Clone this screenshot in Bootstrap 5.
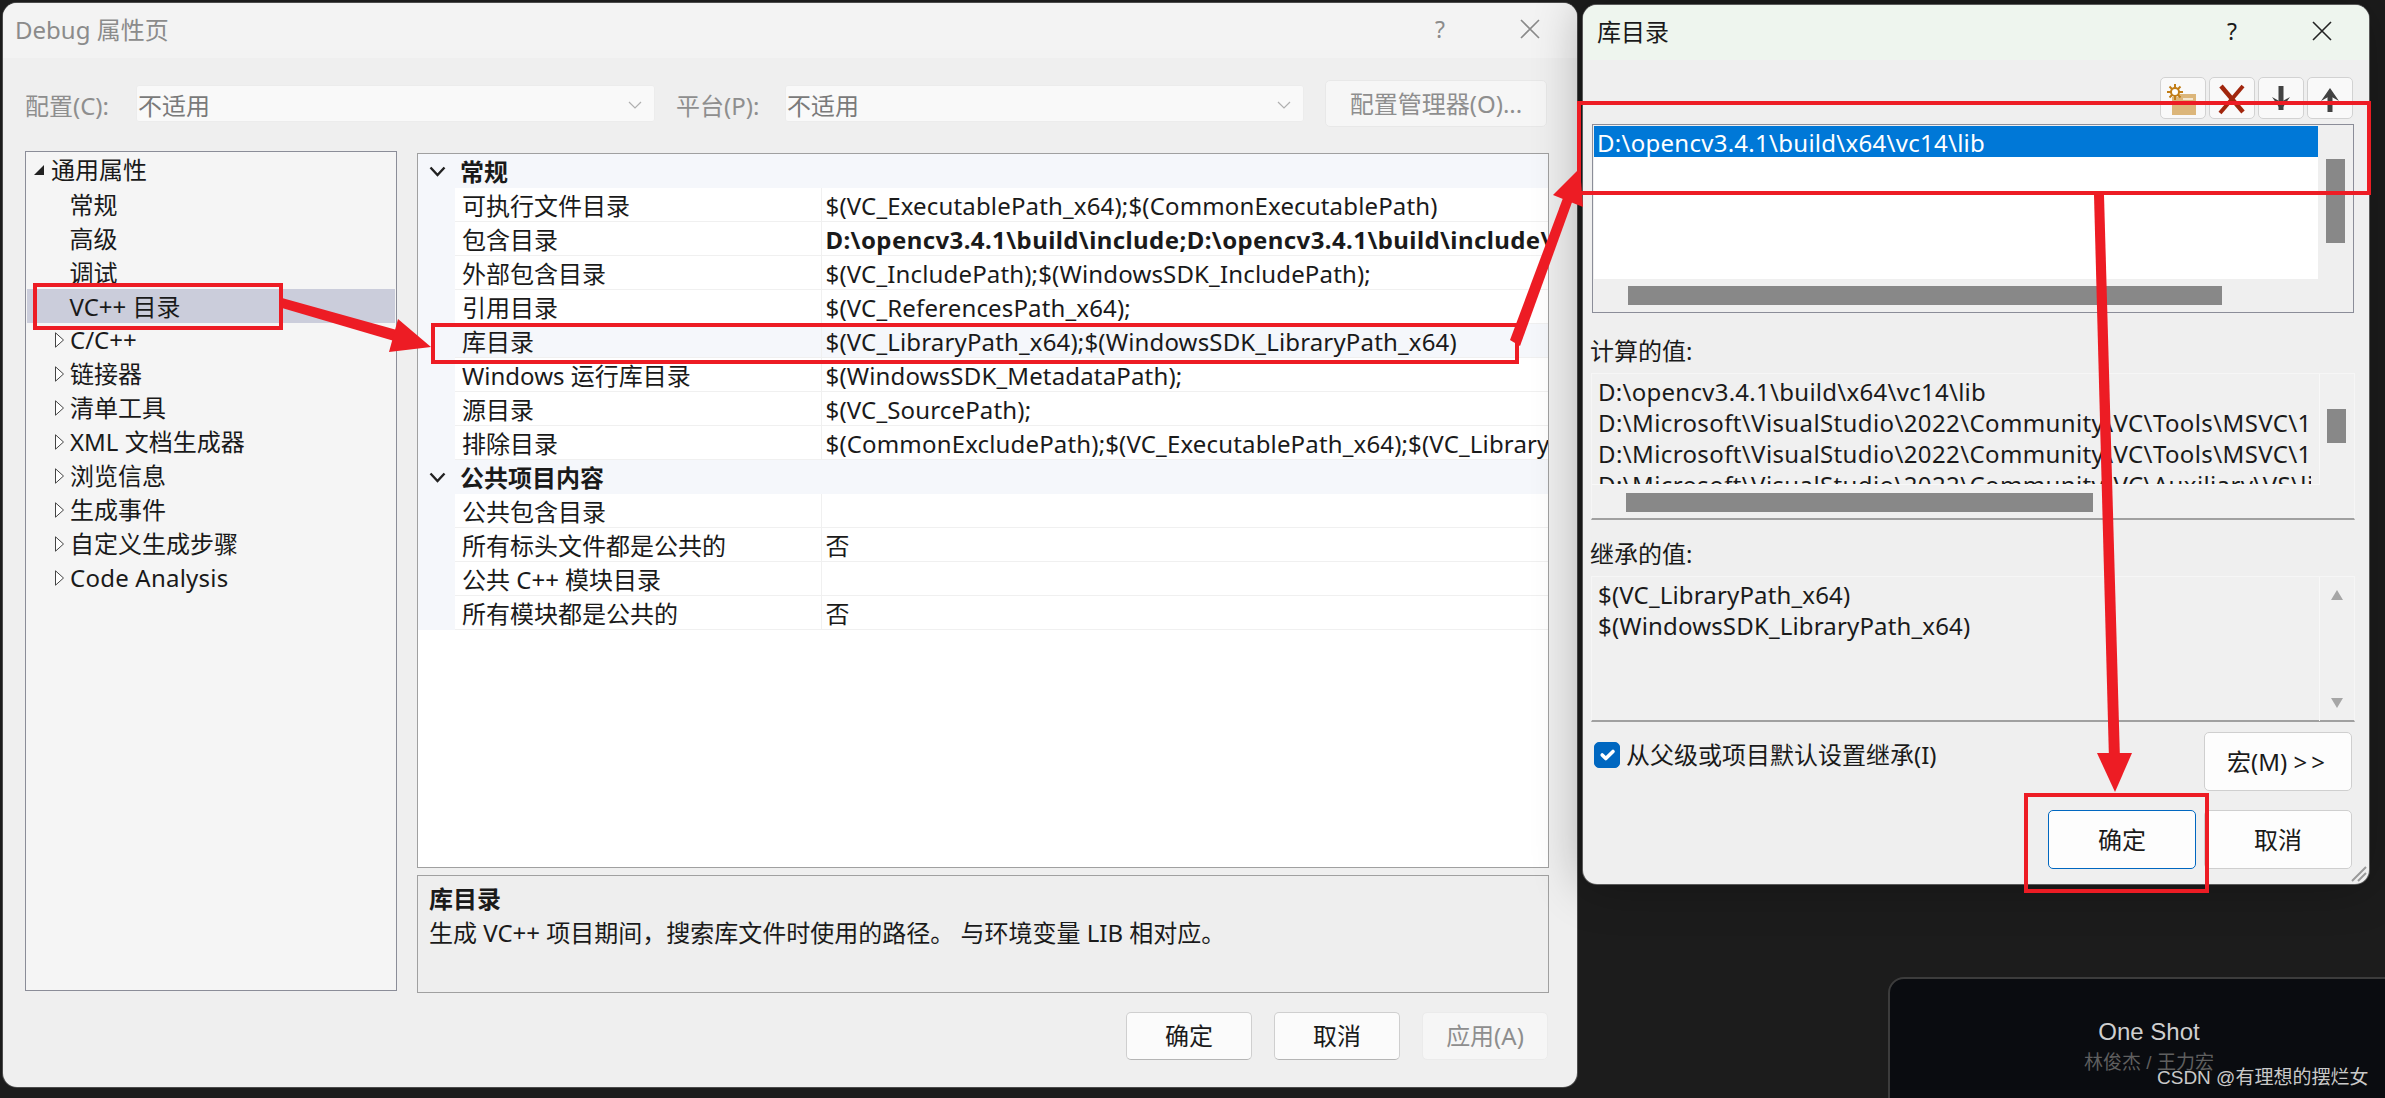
<!DOCTYPE html>
<html lang="zh-CN">
<head>
<meta charset="utf-8">
<title>Debug 属性页</title>
<link rel="stylesheet" href="https://cdn.jsdelivr.net/npm/bootstrap@5.3.0/dist/css/bootstrap.min.css">
<style>
html,body{margin:0;background:#1c1c1c;overflow:hidden}
body{font-family:"Noto Sans","Noto Sans CJK SC",sans-serif;font-size:24px;color:#1a1a1a}
.desk{position:relative;width:2385px;height:1098px;background:#1c1c1c;overflow:hidden}
.win{position:absolute;background:#efefef;border-radius:14px;overflow:hidden;box-shadow:0 0 0 1px #4c4c4c}
.win-a{left:3px;top:3px;width:1574px;height:1084px}
.win-b{left:1583px;top:5px;width:786px;height:879px;box-shadow:0 0 0 1px #5a5a5a,0 0 50px rgba(0,0,0,.3)}
.tbar{height:55px;line-height:55px;flex:none;padding-bottom:3px}
.win-a .tbar{background:#f3f3f3;color:#8b8b8b;padding-left:12px;padding-right:37px}
.win-b .tbar{background:#eef5ee;padding-left:14px;padding-right:37px}
.help-q{width:85px;font-size:23px}
.cfg-row{height:47px;margin-top:22px;padding-left:22px;color:#8e8e8e}
.cfg-label{width:111px;padding-top:4px}
.cfg-label2{width:109px;margin-left:21px;padding-top:4px}
.fake-select{width:519px;height:37px;line-height:37px;background:#f9f9f9;border:1px solid #ececec;border-radius:3px;padding:3px 12px 0 1px;color:#7a7a7a}
.btn.ghost-btn{width:222px;height:47px;margin-left:21px;--bs-btn-disabled-bg:#f6f6f6;--bs-btn-disabled-border-color:#e8e8e8;--bs-btn-disabled-color:#8e8e8e;--bs-btn-disabled-opacity:1;border-radius:5px;font-size:24px;padding:0}
.main-row{margin-top:24px;padding-left:22px}
.tree-box{width:372px;height:840px;background:#f5f5f5;border:1px solid #8b8d98;padding:1px}
.tree-item{height:34px;line-height:36px;white-space:nowrap}
.tree-root{padding-left:7px}
.tree-node{padding-left:28px}
.tree-leaf{padding-left:42.500px}
.tree-on{background:#cbcddb}
.tri-gap{margin-right:7px;flex:none}
.tri-gap2{margin-right:6px;flex:none}
.ltr-fit{letter-spacing:.23px}
.prop-col{margin-left:20px;width:1132px;padding-top:2px}
.prop-grid{height:715px;background:#fff;border:1px solid #a0a0a0;overflow:hidden}
.grid-head{height:34px;line-height:37px;background:#f5f7fb;font-weight:700;padding-left:11px}
.grid-head svg{margin-right:14px;flex:none}
.grid-line{height:34px;line-height:36px;white-space:nowrap}
.gut{width:37px;flex:none;background:#f5f7fb}
.cell-name{width:366px;flex:none;padding-left:7px;border-bottom:1px solid #f0f0f0}
.cell-val{flex:1;min-width:0;overflow:hidden;padding-left:3.500px;border-left:1px solid #f0f0f0;border-bottom:1px solid #f0f0f0;letter-spacing:.16px}
.cell-val.fw-bold{letter-spacing:.4px}
.line-on .cell-name,.line-on .cell-val{background:#f5f7fb}
.desc-box{height:118px;margin-top:7px;background:#eee;border:1px solid #a0a0a0;padding:6px 11px}
.desc-box div{line-height:34px}
.foot-a{margin-top:19px;padding-right:29px;gap:22px}
.btn.std-btn{width:126px;height:48px;background:#fbfbfb;border:1px solid #cfcfcf;border-bottom-color:#b5b5b5;border-radius:5px;font-size:24px;padding:0;color:#1a1a1a}
.btn.std-off{--bs-btn-disabled-bg:#f6f6f6;--bs-btn-disabled-border-color:#ebebeb;--bs-btn-disabled-color:#8e8e8e;--bs-btn-disabled-opacity:1;background:#f6f6f6;border-color:#ebebeb;color:#8e8e8e}
.tool-row{margin-top:17px;padding-right:16px;gap:3px}
.tool-btn{width:46px;height:42px;padding:0;background:#f9f9f9;border:1px solid #d2d2d2;border-radius:5px;line-height:0}
.list-box{height:189px;margin:5px 15px 0 9px;border:1px solid #8b8d98;padding:1px}
.list-white{width:724px;height:153px;background:#fff;flex:none}
.list-sel{height:31px;line-height:33px;background:#0078d7;color:#fff;padding-left:3px;letter-spacing:.27px}
.vtrack{flex:1;padding:33px 0 0 8px}
.vthumb{width:19px;height:84px;background:#888}
.hthumb{height:19px;background:#888}
.hthumb-a{width:594px;margin:7px 0 0 34px}
.sect-label{line-height:44px;margin-left:7px}
.sect-a{padding-top:16px}
.sect-b{padding-top:12px}
.val-box{margin:0 14px 0 8px;border:1px solid #f6f6f6;border-bottom:2px solid #a0a0a0;background:#f0f0f0}
.val-c{height:147px}
.val-d{height:146px}
.val-text{width:728px;flex:none;height:111px;overflow:hidden;padding:2px 8px 0 6px;border-bottom:1px solid #f8f8f8;border-right:1px solid #f8f8f8;white-space:nowrap;letter-spacing:.27px}
.val-d .val-text{height:144px;border-bottom:0;letter-spacing:.16px}
.val-text div{line-height:31px;overflow:hidden}
.val-text .path-fit{letter-spacing:.38px}
.vtrack2{flex:1;padding:35px 0 0 7px}
.vthumb2{width:19px;height:34px;background:#888}
.hthumb-b{width:467px;margin:8px 0 0 34px}
.arrows-box{flex:1;padding:13px 0 12px 0}
.foot-b{margin-top:10px;padding:0 17px 0 11px}
.inherit-check{padding:0;margin:8px 0 0;min-height:0;gap:6px}
.inherit-check .form-check-input{float:none;margin:0;width:26px;height:26px;border-radius:5px;background-color:#0067c0;border-color:#0067c0;flex:none;--bs-form-check-bg-image:url("data:image/svg+xml,%3csvg xmlns='http://www.w3.org/2000/svg' viewBox='0 0 26 26'%3e%3cpath fill='none' stroke='%23fff' stroke-width='1.6' d='M7 13.5l4 5 8-11'/%3e%3c/svg%3e")}
.inherit-check .form-check-label{opacity:1;color:#1a1a1a;line-height:30px}
.big-btn{width:148px;height:59px;background:#fdfdfd;border:1px solid #cfcfcf;border-radius:5px;font-size:24px;padding:0;color:#1a1a1a}
.big-on{border-color:#0067c0}
.wide-gt{letter-spacing:4px}
.foot-c{margin-top:19px;padding-right:17px;gap:8px}
.grip{position:absolute;right:2px;bottom:2px}
.player{position:absolute;left:1888px;top:977px;width:500px;height:125px;background:#0a0c10;border:2px solid #3c3c3c;border-radius:16px 0 0 0;padding-left:22px;padding-top:38px;text-align:center;font-family:"Liberation Sans","Noto Sans CJK SC",sans-serif}
.player-t{color:#cfcfcf;font-size:24px;line-height:30px}
.player-s{color:#5f5f5f;font-size:19px;line-height:26px;margin-top:3px}
.wm{position:absolute;left:2157px;top:1065px;color:#c9c9c9;font-size:19px;line-height:26px;white-space:nowrap;font-family:"Liberation Sans","Noto Sans CJK SC",sans-serif}
.annot{position:absolute;left:0;top:0;pointer-events:none}
</style>
</head>
<body>
<div class="desk">

  <section class="win win-a d-flex flex-column">
    <div class="tbar d-flex align-items-center">
      <span>Debug 属性页</span>
      <span class="help-q ms-auto">?</span>
      <svg width="20" height="20" viewBox="0 0 20 20"><path d="M1 1l18 18M19 1L1 19" stroke="#8a8a8a" stroke-width="1.6" fill="none"/></svg>
    </div>
    <div class="cfg-row d-flex align-items-center">
      <span class="cfg-label">配置(C):</span>
      <div class="fake-select d-flex justify-content-between align-items-center"><span>不适用</span><svg width="14" height="8" viewBox="0 0 14 8"><path d="M1 1l6 6 6-6" stroke="#b0b0b0" fill="none" stroke-width="1.2"/></svg></div>
      <span class="cfg-label2">平台(P):</span>
      <div class="fake-select d-flex justify-content-between align-items-center"><span>不适用</span><svg width="14" height="8" viewBox="0 0 14 8"><path d="M1 1l6 6 6-6" stroke="#b0b0b0" fill="none" stroke-width="1.2"/></svg></div>
      <button class="btn ghost-btn" type="button" disabled>配置管理器(O)...</button>
    </div>
    <div class="main-row d-flex">
      <nav class="tree-box flex-none">
        <div class="tree-item tree-root d-flex align-items-center"><svg class="tri-gap" width="10" height="10" viewBox="0 0 10 10"><path d="M10 0v10H0z" fill="#222"/></svg>通用属性</div>
        <div class="tree-item tree-leaf">常规</div>
        <div class="tree-item tree-leaf">高级</div>
        <div class="tree-item tree-leaf">调试</div>
        <div class="tree-item tree-leaf tree-on">VC++ 目录</div>
        <div class="tree-item tree-node d-flex align-items-center"><svg class="tri-gap2" width="9" height="16" viewBox="0 0 9 16"><path d="M.5.8l8 7.2-8 7.2z" fill="#fff" stroke="#444"/></svg>C/C++</div>
        <div class="tree-item tree-node d-flex align-items-center"><svg class="tri-gap2" width="9" height="16" viewBox="0 0 9 16"><path d="M.5.8l8 7.2-8 7.2z" fill="#fff" stroke="#444"/></svg>链接器</div>
        <div class="tree-item tree-node d-flex align-items-center"><svg class="tri-gap2" width="9" height="16" viewBox="0 0 9 16"><path d="M.5.8l8 7.2-8 7.2z" fill="#fff" stroke="#444"/></svg>清单工具</div>
        <div class="tree-item tree-node d-flex align-items-center"><svg class="tri-gap2" width="9" height="16" viewBox="0 0 9 16"><path d="M.5.8l8 7.2-8 7.2z" fill="#fff" stroke="#444"/></svg>XML 文档生成器</div>
        <div class="tree-item tree-node d-flex align-items-center"><svg class="tri-gap2" width="9" height="16" viewBox="0 0 9 16"><path d="M.5.8l8 7.2-8 7.2z" fill="#fff" stroke="#444"/></svg>浏览信息</div>
        <div class="tree-item tree-node d-flex align-items-center"><svg class="tri-gap2" width="9" height="16" viewBox="0 0 9 16"><path d="M.5.8l8 7.2-8 7.2z" fill="#fff" stroke="#444"/></svg>生成事件</div>
        <div class="tree-item tree-node d-flex align-items-center"><svg class="tri-gap2" width="9" height="16" viewBox="0 0 9 16"><path d="M.5.8l8 7.2-8 7.2z" fill="#fff" stroke="#444"/></svg>自定义生成步骤</div>
        <div class="tree-item tree-node d-flex align-items-center"><svg class="tri-gap2" width="9" height="16" viewBox="0 0 9 16"><path d="M.5.8l8 7.2-8 7.2z" fill="#fff" stroke="#444"/></svg><span class="ltr-fit">Code Analysis</span></div>
      </nav>
      <div class="prop-col d-flex flex-column">
        <div class="prop-grid">
          <div class="grid-head d-flex align-items-center"><svg width="17" height="11" viewBox="0 0 17 11"><path d="M1.5 1.5l7 7.5 7-7.5" stroke="#222" stroke-width="2.4" fill="none"/></svg>常规</div>
          <div class="grid-line d-flex"><div class="gut"></div><div class="cell-name">可执行文件目录</div><div class="cell-val">$(VC_ExecutablePath_x64);$(CommonExecutablePath)</div></div>
          <div class="grid-line d-flex"><div class="gut"></div><div class="cell-name">包含目录</div><div class="cell-val fw-bold">D:\opencv3.4.1\build\include;D:\opencv3.4.1\build\include\</div></div>
          <div class="grid-line d-flex"><div class="gut"></div><div class="cell-name">外部包含目录</div><div class="cell-val">$(VC_IncludePath);$(WindowsSDK_IncludePath);</div></div>
          <div class="grid-line d-flex"><div class="gut"></div><div class="cell-name">引用目录</div><div class="cell-val">$(VC_ReferencesPath_x64);</div></div>
          <div class="grid-line line-on d-flex"><div class="gut"></div><div class="cell-name">库目录</div><div class="cell-val">$(VC_LibraryPath_x64);$(WindowsSDK_LibraryPath_x64)</div></div>
          <div class="grid-line d-flex"><div class="gut"></div><div class="cell-name">Windows 运行库目录</div><div class="cell-val">$(WindowsSDK_MetadataPath);</div></div>
          <div class="grid-line d-flex"><div class="gut"></div><div class="cell-name">源目录</div><div class="cell-val">$(VC_SourcePath);</div></div>
          <div class="grid-line d-flex"><div class="gut"></div><div class="cell-name">排除目录</div><div class="cell-val">$(CommonExcludePath);$(VC_ExecutablePath_x64);$(VC_Library</div></div>
          <div class="grid-head d-flex align-items-center"><svg width="17" height="11" viewBox="0 0 17 11"><path d="M1.5 1.5l7 7.5 7-7.5" stroke="#222" stroke-width="2.4" fill="none"/></svg>公共项目内容</div>
          <div class="grid-line d-flex"><div class="gut"></div><div class="cell-name">公共包含目录</div><div class="cell-val"></div></div>
          <div class="grid-line d-flex"><div class="gut"></div><div class="cell-name">所有标头文件都是公共的</div><div class="cell-val">否</div></div>
          <div class="grid-line d-flex"><div class="gut"></div><div class="cell-name">公共 C++ 模块目录</div><div class="cell-val"></div></div>
          <div class="grid-line d-flex"><div class="gut"></div><div class="cell-name">所有模块都是公共的</div><div class="cell-val">否</div></div>
        </div>
        <div class="desc-box">
          <div class="fw-bold">库目录</div>
          <div>生成 VC++ 项目期间，搜索库文件时使用的路径。 与环境变量 LIB 相对应。</div>
        </div>
      </div>
    </div>
    <div class="foot-a d-flex justify-content-end">
      <button class="btn std-btn" type="button">确定</button>
      <button class="btn std-btn" type="button">取消</button>
      <button class="btn std-btn std-off" type="button" disabled>应用(A)</button>
    </div>
  </section>

  <section class="win win-b d-flex flex-column">
    <div class="tbar d-flex align-items-center">
      <span>库目录</span>
      <span class="help-q ms-auto">?</span>
      <svg width="20" height="20" viewBox="0 0 20 20"><path d="M1 1l18 18M19 1L1 19" stroke="#222" stroke-width="1.6" fill="none"/></svg>
    </div>
    <div class="tool-row d-flex justify-content-end">
      <button class="btn tool-btn" type="button" aria-label="新建"><svg width="44" height="40" viewBox="0 0 44 40"><path d="M11 19h24v18H11z" fill="#dcb67a"/><path d="M18 16h17v3H18z" fill="#dcb67a"/><path d="M22 20h10v2H22z" fill="#f3e6cf"/><path d="M14 6v16M6 14h16M8.500 8.500l11 11M19.500 8.500l-11 11" stroke="#c27d16" stroke-width="2"/><circle cx="14" cy="14" r="4" fill="#fff" stroke="#c27d16" stroke-width="2"/></svg></button>
      <button class="btn tool-btn" type="button" aria-label="删除"><svg width="44" height="40" viewBox="0 0 44 40"><path d="M11 8l22 26" stroke="#a1260d" stroke-width="4.500"/><path d="M33 8L10 35" stroke="#a1260d" stroke-width="4"/></svg></button>
      <button class="btn tool-btn" type="button" aria-label="下移"><svg width="44" height="40" viewBox="0 0 44 40"><path d="M22 8v24" stroke="#424242" stroke-width="5"/><path d="M13 19l9 13 9-13-9 5z" fill="#424242"/></svg></button>
      <button class="btn tool-btn" type="button" aria-label="上移"><svg width="44" height="40" viewBox="0 0 44 40"><path d="M22 14v20" stroke="#424242" stroke-width="5"/><path d="M13 23l9-13 9 13-9-5z" fill="#424242"/></svg></button>
    </div>
    <div class="list-box d-flex flex-column">
      <div class="d-flex">
        <div class="list-white"><div class="list-sel">D:\opencv3.4.1\build\x64\vc14\lib</div></div>
        <div class="vtrack"><div class="vthumb"></div></div>
      </div>
      <div class="hthumb hthumb-a"></div>
    </div>
    <div class="sect-label sect-a">计算的值:</div>
    <div class="val-box val-c d-flex flex-column">
      <div class="d-flex">
        <div class="val-text">
          <div>D:\opencv3.4.1\build\x64\vc14\lib</div>
          <div class="path-fit">D:\Microsoft\VisualStudio\2022\Community\VC\Tools\MSVC\1</div>
          <div class="path-fit">D:\Microsoft\VisualStudio\2022\Community\VC\Tools\MSVC\1</div>
          <div class="path-fit">D:\Microsoft\VisualStudio\2022\Community\VC\Auxiliary\VS\li</div>
        </div>
        <div class="vtrack2"><div class="vthumb2"></div></div>
      </div>
      <div class="hthumb hthumb-b"></div>
    </div>
    <div class="sect-label sect-b">继承的值:</div>
    <div class="val-box val-d d-flex">
      <div class="val-text">
        <div>$(VC_LibraryPath_x64)</div>
        <div>$(WindowsSDK_LibraryPath_x64)</div>
      </div>
      <div class="arrows-box d-flex flex-column justify-content-between align-items-center">
        <svg width="12" height="10" viewBox="0 0 12 10"><path d="M6 0l6 10H0z" fill="#a6a6a6"/></svg>
        <svg width="12" height="10" viewBox="0 0 12 10"><path d="M6 10L12 0H0z" fill="#a6a6a6"/></svg>
      </div>
    </div>
    <div class="foot-b d-flex justify-content-between align-items-start">
      <div class="form-check inherit-check d-flex align-items-center">
        <input class="form-check-input" type="checkbox" id="inh" checked>
        <label class="form-check-label" for="inh">从父级或项目默认设置继承(I)</label>
      </div>
      <button class="btn big-btn" type="button">宏(M) <span class="wide-gt">&gt;&gt;</span></button>
    </div>
    <div class="foot-c d-flex justify-content-end">
      <button class="btn big-btn big-on" type="button">确定</button>
      <button class="btn big-btn" type="button">取消</button>
    </div>
    <svg class="grip" width="18" height="18" viewBox="0 0 18 18"><path d="M17 3L3 17M17 9l-8 8" stroke="#9a9a9a" stroke-width="2" fill="none"/></svg>
  </section>

  <aside class="player">
    <div class="player-t">One Shot</div>
    <div class="player-s">林俊杰 / 王力宏</div>
  </aside>
  <div class="wm">CSDN @有理想的摆烂女</div>

  <svg class="annot" width="2385" height="1098" viewBox="0 0 2385 1098">
    <g fill="none" stroke="#ed1c24" stroke-width="4">
      <rect x="35" y="285" width="246" height="43"/>
      <rect x="433" y="325" width="1084" height="37"/>
      <rect x="1579" y="103" width="790" height="90"/>
      <rect x="2026" y="795" width="181" height="96"/>
    </g>
    <g fill="#ed1c24">
      <path d="M282 298l122 34 -3 11L282 308z"/>
      <path d="M398 319l33 28-42 5z"/>
      <path d="M1510 340l56-150 9 4-55 152z"/>
      <path d="M1553 195l27-27 3 39z"/>
      <path d="M2094 195h10l16 565h-11z"/>
      <path d="M2097 753h35l-17 39z"/>
    </g>
  </svg>
</div>
<script src="https://cdn.jsdelivr.net/npm/bootstrap@5.3.0/dist/js/bootstrap.bundle.min.js"></script>
</body>
</html>
